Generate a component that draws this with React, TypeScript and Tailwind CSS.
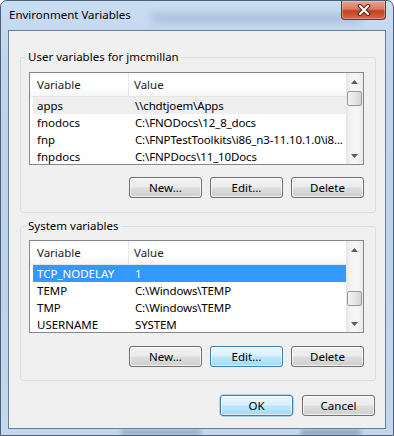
import React from "react";

type Row = [string, string];

function Btn({ label, hot }: { label: string; hot?: boolean }) {
  return (
    <div
      className={
        hot
          ? "w-[73px] h-[21px] rounded-[3px] border border-[#3c7fb1] flex items-center justify-center text-black bg-[linear-gradient(#eaf6fd_0%,#d9f0fc_48%,#bee6fd_52%,#a7d9f5_100%)] shadow-[inset_0_0_0_1px_rgba(255,255,255,0.6)]"
          : "w-[73px] h-[21px] rounded-[3px] border border-[#707070] flex items-center justify-center text-black bg-[linear-gradient(#f2f2f2_0%,#ebebeb_48%,#dddddd_52%,#cfcfcf_100%)] shadow-[inset_0_0_0_1px_rgba(255,255,255,0.7)]"
      }
    >
      {label}
    </div>
  );
}

function Arrow({ up }: { up?: boolean }) {
  return (
    <div className="h-[17px] flex items-center justify-center">
      <svg width="7" height="4" viewBox="0 0 7 4">
        {up ? (
          <path d="M0 4 L3.5 0 L7 4 Z" fill="#5a5a5a" />
        ) : (
          <path d="M0 0 L3.5 4 L7 0 Z" fill="#5a5a5a" />
        )}
      </svg>
    </div>
  );
}

function ListView({
  rows,
  sel,
  active,
  thumbTop,
}: {
  rows: Row[];
  sel: number;
  active: boolean;
  thumbTop: number;
}) {
  return (
    <div className="w-[335px] h-[93px] border border-[#828790] bg-white flex overflow-hidden">
      <div className="flex-1 flex flex-col min-w-0">
        <div className="h-[24px] flex items-center border-b border-[#e5e5e5] bg-[linear-gradient(#ffffff_0%,#ffffff_60%,#f6f7f8_100%)] text-[#1e1e1e] shrink-0">
          <div className="w-[99px] h-full flex items-center pl-[7px] border-r border-[#e3e5e8]">Variable</div>
          <div className="pl-[5px]">Value</div>
        </div>
        {rows.map((r, i) => {
          const isSel = i === sel;
          const rowCls = isSel
            ? active
              ? "bg-[#3399ff] text-white"
              : "bg-[#efefef] text-black"
            : "text-black";
          return (
            <div
              key={i}
              className={"h-[17px] shrink-0 ml-[3px] flex items-center whitespace-nowrap " + rowCls}
            >
              <div className="w-[96px] pl-[4px] shrink-0">{r[0]}</div>
              <div className="pl-[6px] tracking-[-0.15px]">{r[1]}</div>
            </div>
          );
        })}
      </div>
      <div className="w-[17px] h-full bg-[linear-gradient(90deg,#e6e6e6,#f5f5f5_30%,#f5f5f5_70%,#e9e9e9)] flex flex-col relative shrink-0">
        <Arrow up />
        <div className="flex-1" />
        <Arrow />
        <div
          className="absolute left-[1px] w-[15px] h-[15px] rounded-[2px] border border-[#979797] bg-[linear-gradient(90deg,#f4f4f4,#e6e6e6_50%,#d6d6d6)]"
          style={{ top: thumbTop }}
        />
      </div>
    </div>
  );
}

function Group({
  title,
  children,
  className,
}: {
  title: string;
  children: React.ReactNode;
  className?: string;
}) {
  return (
    <div className={"relative ml-[11px] w-[356px] border border-[#d5dfe5] rounded-[3px] pl-[8px] " + (className || "")}>
      <div className="absolute left-[5px] -top-[9px] px-[2px] bg-[#f0f0f0] leading-[16px] text-black">
        {title}
      </div>
      {children}
    </div>
  );
}

export default function App() {
  const userRows: Row[] = [
    ["apps", "\\\\chdtjoem\\Apps"],
    ["fnodocs", "C:\\FNODocs\\12_8_docs"],
    ["fnp", "C:\\FNPTestToolkits\\i86_n3-11.10.1.0\\i8..."],
    ["fnpdocs", "C:\\FNPDocs\\11_10Docs"],
  ];
  const sysRows: Row[] = [
    ["TCP_NODELAY", "1"],
    ["TEMP", "C:\\Windows\\TEMP"],
    ["TMP", "C:\\Windows\\TEMP"],
    ["USERNAME", "SYSTEM"],
  ];
  return (
    <div className="w-[394px] h-[436px] relative overflow-hidden rounded-t-[7px] border border-[#4e6076] bg-[linear-gradient(#c9ddf3_0%,#bfd5ee_15%,#bcd3ec_60%,#c3d8ef_100%)] text-[11.5px] [font-family:'Noto_Sans','Segoe_UI',sans-serif]">
      <div className="absolute left-[150px] top-[13px] w-[210px] h-[8px] bg-[#5d7898] opacity-30 blur-[4px]" />
      <div className="absolute left-[120px] top-[429px] w-[80px] h-[5px] bg-[#4a6385] opacity-40 blur-[2px]" />
      <div className="absolute left-[300px] top-[429px] w-[60px] h-[5px] bg-[#4a6385] opacity-50 blur-[2px]" />
      <div className="relative h-[29px] flex items-start justify-between">
        <div className="ml-[8px] mt-[6px] leading-[16px] text-black">Environment Variables</div>
        <div className="mr-[7px] w-[45px] h-[19px] rounded-b-[4px] border border-t-0 border-[#7d2f22] bg-[linear-gradient(#e9a595_0%,#d9785f_45%,#c5401f_55%,#d46a4c_100%)] flex items-center justify-center shadow-[inset_0_0_0_1px_rgba(255,220,210,0.35)]">
          <svg width="14" height="12" viewBox="0 0 14 12">
            <path d="M3 2 L11 10 M11 2 L3 10" stroke="#5a1e14" strokeWidth="4" strokeLinecap="square" />
            <path d="M3 2 L11 10 M11 2 L3 10" stroke="#ffffff" strokeWidth="2" strokeLinecap="square" />
          </svg>
        </div>
      </div>
      <div className="relative mx-[7px] h-[399px] border border-[#6b7d91] bg-[#f0f0f0] flex flex-col pt-[26px]">
        <Group title="User variables for jmcmillan" className="pt-[14px] pb-[14px]">
          <ListView rows={userRows} sel={0} active={false} thumbTop={18} />
          <div className="w-[335px] mt-[12px] flex justify-end gap-[8px]">
            <Btn label="New..." />
            <Btn label="Edit..." />
            <Btn label="Delete" />
          </div>
        </Group>
        <Group title="System variables" className="mt-[13px] pt-[13px] pb-[13px]">
          <ListView rows={sysRows} sel={0} active={true} thumbTop={50} />
          <div className="w-[335px] mt-[13px] flex justify-end gap-[8px]">
            <Btn label="New..." />
            <Btn label="Edit..." hot />
            <Btn label="Delete" />
          </div>
        </Group>
        <div className="mt-[14px] mr-[10px] flex justify-end gap-[9px]">
          <div className="rounded-[4px] shadow-[0_0_0_1px_#a6d6f2]">
            <Btn label="OK" hot />
          </div>
          <Btn label="Cancel" />
        </div>
      </div>
    </div>
  );
}
